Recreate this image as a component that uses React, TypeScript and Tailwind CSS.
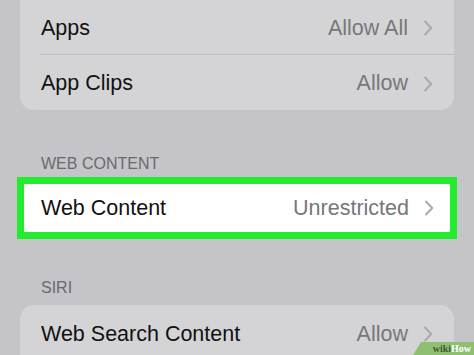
import React from "react";

const Chevron = ({ color = "#aaaaae" }: { color?: string }) => (
  <svg width="10" height="16" viewBox="0 0 10 16" className="shrink-0">
    <path d="M2 1.5 L8.2 8 L2 14.5" fill="none" stroke={color} strokeWidth="2" strokeLinecap="round" strokeLinejoin="round" />
  </svg>
);

const Row = ({ label, value, h = "h-[55px]" }: { label: string; value: string; h?: string }) => (
  <div className={`flex items-center ${h} pl-[21px] pr-[21px] pt-[2px]`}>
    <span className="flex-1 text-[21.5px] text-[#111111]">{label}</span>
    <span className="text-[21.5px] text-[#77777b] mr-[15px]">{value}</span>
    <Chevron />
  </div>
);

export default function App() {
  return (
    <div
      className="relative w-[474px] h-[355px] overflow-hidden bg-[#c5c4c9]"
      style={{ fontFamily: '"Liberation Sans", Arial, sans-serif' }}
    >
      <div className="mx-[20px] bg-[#d4d4d6] rounded-b-[14px]">
        <Row label="Apps" value="Allow All" h="h-[54px]" />
        <div className="ml-[20px] h-px bg-[#bdbdc0]" />
        <Row label="App Clips" value="Allow" />
      </div>

      <div className="pt-[44px] pl-[41px] h-[67px] text-[16px] text-[#6a6a6e] leading-[20px]">
        WEB CONTENT
      </div>

      <div className="mx-[17px] border-[7px] border-[#22ec2e] bg-white">
        <div className="flex items-center h-[48px] pl-[17px] pr-[16px]">
          <span className="flex-1 text-[21.5px] text-[#111111]">Web Content</span>
          <span className="text-[21.5px] text-[#77777b] mr-[15px]">Unrestricted</span>
          <Chevron />
        </div>
      </div>

      <div className="pt-[39px] pl-[41px] h-[66px] text-[16px] text-[#6a6a6e] leading-[20px]">
        SIRI
      </div>

      <div className="mx-[20px] bg-[#d4d4d6] rounded-t-[14px]">
        <Row label="Web Search Content" value="Allow" h="h-[56px]" />
      </div>

      <div className="absolute right-0 bottom-0 w-[61px] h-[13px] bg-[#8fbf72] [clip-path:polygon(8px_0,100%_0,100%_100%,0_100%)] flex items-center justify-end pr-[3px]">
        <span
          className="text-[10px] font-bold leading-none"
          style={{ fontFamily: '"Liberation Serif", "DejaVu Serif", serif' }}
        >
          <span className="text-[#3f5a33]">wiki</span>
          <span className="text-white">How</span>
        </span>
      </div>
    </div>
  );
}
